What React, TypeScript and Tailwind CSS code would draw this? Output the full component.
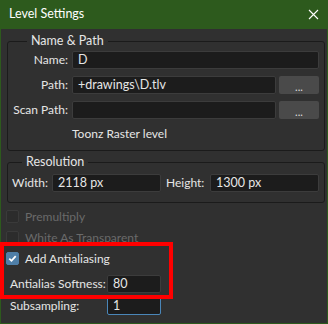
const font = { fontFamily: 'Lato, "Segoe UI", sans-serif' };

function Field({ value, focused, className }: { value?: string; focused?: boolean; className?: string }) {
  return (
    <div
      className={
        "h-[18px] rounded-[2px] border bg-[#1c1c1c] px-[5px] flex items-center text-[12.5px] text-[#e6e6e6] whitespace-nowrap " +
        (focused ? "border-[#4a86b8] " : "border-[#3c3c3c] ") +
        (className ?? "")
      }
    >
      {value}
    </div>
  );
}

function BrowseButton() {
  return (
    <div className="h-[18px] w-[40px] rounded-[2px] bg-[#4a4a4a] flex items-end justify-center pb-[2px] text-[11px] leading-none text-[#dcdcdc]">
      ...
    </div>
  );
}

function Check({ label, checked, disabled }: { label: string; checked?: boolean; disabled?: boolean }) {
  return (
    <div className="h-[21px] flex items-center gap-[6px] pl-[5px]">
      <div
        className={
          "w-[13px] h-[13px] rounded-[2px] border flex items-center justify-center " +
          (checked ? "bg-[#4f7fa8] border-[#4f7fa8]" : "bg-[#2c2c2c] border-[#3a3a3a]")
        }
      >
        {checked && (
          <svg width="9" height="9" viewBox="0 0 9 9">
            <path d="M1.3 4.6 L3.5 6.8 L7.7 2.2" fill="none" stroke="#ffffff" strokeWidth="1.8" />
          </svg>
        )}
      </div>
      <span className={"text-[12px] whitespace-nowrap " + (disabled ? "text-[#6a6a6a]" : "text-[#e6e6e6]")}>{label}</span>
    </div>
  );
}

function GroupBox({ title, titleLeft, className, children }: { title: string; titleLeft: string; className: string; children: React.ReactNode }) {
  return (
    <div className={"relative w-[318px] ml-[6px] rounded-[3px] border border-[#1b1b1b] " + className}>
      <span className={"absolute top-[-9px] px-[4px] bg-[#303030] text-[12.5px] leading-[16px] text-[#e6e6e6] whitespace-nowrap " + titleLeft}>
        {title}
      </span>
      {children}
    </div>
  );
}

export default function App() {
  return (
    <div className="relative w-[328px] h-[324px] bg-[#2d5a1d] flex flex-col px-[1px] pb-[1px] select-none" style={font}>
      <div className="h-[29px] flex items-center justify-between pl-[8px] pr-[8px]">
        <span className="text-[12.5px] text-white">Level Settings</span>
        <svg width="11" height="11" viewBox="0 0 11 11">
          <path d="M1 1 L10 10 M10 1 L1 10" stroke="#ffffff" strokeWidth="1.1" />
        </svg>
      </div>

      <div className="flex-1 bg-[#303030] flex flex-col pt-[12px]">
        <GroupBox title="Name & Path" titleLeft="left-[19px]" className="h-[110px] pt-[9px] pr-[5px]">
          <div className="grid grid-cols-[60px_1fr] gap-x-[4px] gap-y-[7px] items-center text-[12px] text-[#e6e6e6] whitespace-nowrap">
            <span className="text-right">Name:</span>
            <Field value="D" />
            <span className="text-right">Path:</span>
            <div className="flex gap-[3px]">
              <Field value="+drawings\D.tlv" className="flex-1" />
              <BrowseButton />
            </div>
            <span className="text-right">Scan Path:</span>
            <div className="flex gap-[3px]">
              <Field className="flex-1" />
              <BrowseButton />
            </div>
            <span />
            <span className="h-[15px] leading-[15px]">Toonz Raster level</span>
          </div>
        </GroupBox>

        <GroupBox title="Resolution" titleLeft="left-[14px]" className="mt-[11px] h-[41px] pt-[11px] pr-[5px]">
          <div className="grid grid-cols-[44px_109px_49px_1fr] items-center text-[12px] text-[#e6e6e6] whitespace-nowrap">
            <span className="pl-[4px]">Width:</span>
            <Field value="2118 px" />
            <span className="pl-[5px]">Height:</span>
            <Field value="1300 px" />
          </div>
        </GroupBox>

        <div className="mt-[3px] flex flex-col">
          <Check label="Premultiply" disabled />
          <Check label="White As Transparent" disabled />
          <Check label="Add Antialiasing" checked />
        </div>

        <div className="mt-[6px] grid grid-cols-[97px_54px] gap-y-[4px] items-center pl-[9px] text-[12px] text-[#e6e6e6] whitespace-nowrap">
          <span>Antialias Softness:</span>
          <Field value="80" />
          <span>Subsampling:</span>
          <Field value="1" focused />
        </div>
      </div>

      <div className="absolute left-0 top-[242px] w-[173px] h-[57px] border-[4px] border-[#ff0000]" />
    </div>
  );
}
